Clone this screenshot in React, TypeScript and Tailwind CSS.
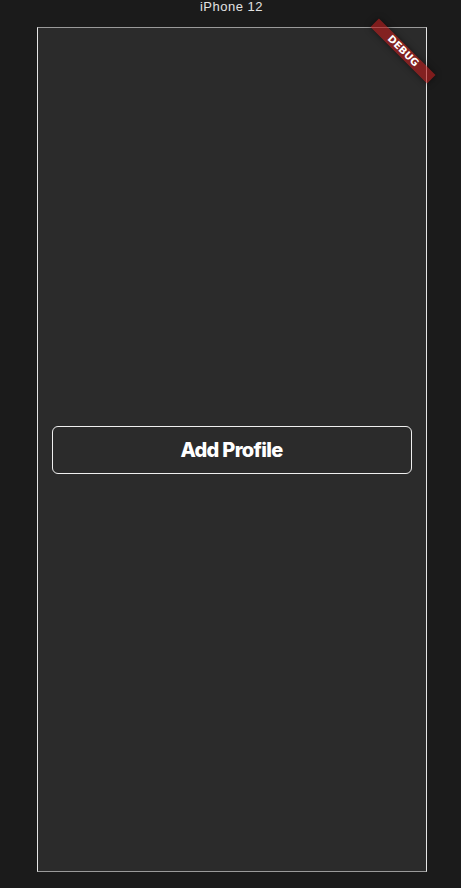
import React from "react";

export default function App() {
  return (
    <div className="w-[461px] h-[888px] bg-[#1b1b1b] flex flex-col items-center overflow-hidden">
      <div className="h-[27px] w-full flex justify-center pl-[2px] text-[13px] leading-[13px] tracking-[0.5px] text-[#e2e2e2] font-['Liberation_Sans',Arial,sans-serif]">
        iPhone 12
      </div>
      <div className="relative ml-[2px] w-[390px] h-[845px] bg-[#2b2b2b] border-x border-x-[#e6e6e6] border-y border-y-[#9a9a9a] flex flex-col justify-center px-[14px]">
        <button className="h-[48px] w-full rounded-[6px] border border-[#f0f0f0] flex items-center justify-center pt-[1px] text-white text-[20px] font-extrabold tracking-[-0.7px] font-[Inter,'Noto_Sans',sans-serif]">
          Add Profile
        </button>
        <div className="absolute left-[325px] top-[17px] w-[80px] h-[12px] rotate-45 bg-[rgba(183,28,28,0.63)] flex items-center justify-center text-white text-[10px] leading-[10px] font-black shadow-[0_0_6px_rgba(0,0,0,0.5)] font-['DejaVu_Sans','Liberation_Sans',sans-serif]">
          DEBUG
        </div>
      </div>
    </div>
  );
}
